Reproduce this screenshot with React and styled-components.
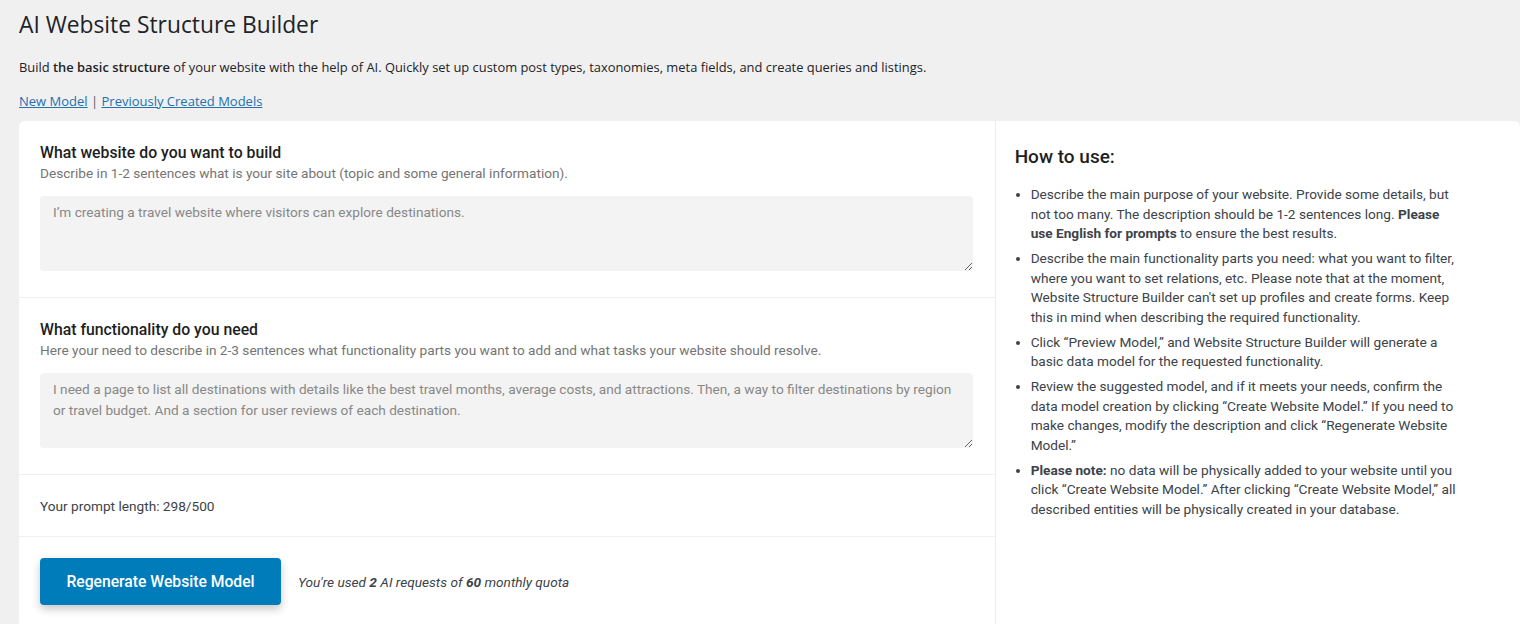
import styled, { createGlobalStyle } from 'styled-components';

const GlobalStyle = createGlobalStyle`
    body {
        margin: 0;
        background: #f0f0f1;
        color: #3c434a;
        font-family: "Open Sans", "Noto Sans", sans-serif;
        font-size: 13px;
    }
`;

const Page = styled.div`
    padding: 0 0 0 19px;
    overflow: hidden;
`;

const Title = styled.h1`
    margin: 0;
    padding: 9px 0 0;
    font-size: 22.8px;
    font-weight: 400;
    line-height: 32px;
    color: #1d2327;
`;

const Lead = styled.p`
    margin: 16px 0 0;
    font-size: 12.9px;
    line-height: 20px;
    color: #1d2327;

    & b {
        font-weight: 600;
    }
`;

const Links = styled.div`
    margin-top: 14px;
    font-size: 13px;
    line-height: 20px;
    color: #50575e;

    & a {
        color: #2271b1;
        text-decoration: underline;
    }
`;

const Card = styled.div`
    margin-top: 10px;
    display: grid;
    grid-template-columns: 65% 35%;
    background: #fff;
    border-radius: 6px;
    font-family: Roboto, "Liberation Sans", sans-serif;
`;

const Main = styled.div`
    display: flex;
    flex-direction: column;
`;

const Section = styled.div`
    padding: ${({ $pad }) => $pad || '22px 22px 26px 21px'};
    border-bottom: ${({ $last }) => ($last ? 'none' : '1px solid #efefef')};
    display: flex;
    align-items: center;
    gap: 17px;
    flex-wrap: wrap;
`;

const Field = styled.div`
    width: 100%;
`;

const FieldTitle = styled.div`
    font-size: 15.8px;
    font-weight: 500;
    line-height: 20px;
    color: #1e1e1e;
`;

const FieldHint = styled.div`
    font-size: 13.65px;
    line-height: 20px;
    color: #757575;
`;

const TextArea = styled.textarea`
    display: block;
    box-sizing: border-box;
    width: 100%;
    height: 75px;
    margin-top: 13px;
    padding: 6px 13px;
    border: none;
    border-radius: 4px;
    background: #f3f3f3;
    resize: vertical;
    font-family: Roboto, "Liberation Sans", sans-serif;
    font-size: 13.65px;
    line-height: 21px;
    color: #888;
    outline: none;

    &::placeholder {
        color: #888;
        opacity: 1;
    }
`;

const Counter = styled.div`
    font-size: 13.65px;
    line-height: 20px;
    color: #3c434a;
`;

const PrimaryButton = styled.button`
    width: 241px;
    height: 47px;
    border: none;
    border-radius: 4px;
    background: #007cba;
    color: #fff;
    font-family: Roboto, "Liberation Sans", sans-serif;
    font-size: 15.7px;
    font-weight: 500;
    box-shadow: 0 4px 8px rgba(0, 0, 0, 0.22);
    cursor: pointer;
`;

const Quota = styled.span`
    font-size: 13.65px;
    font-style: italic;
    color: #3c434a;

    & b {
        font-weight: 700;
    }
`;

const Aside = styled.div`
    border-left: 1px solid #ececec;
    padding: 24px 20px 20px 19px;
`;

const AsideTitle = styled.h3`
    margin: 0;
    font-size: 19px;
    font-weight: 500;
    line-height: 24px;
    color: #1e1e1e;
`;

const Steps = styled.ul`
    margin: 16px 0 0;
    padding: 0 0 0 16px;
    max-width: 429px;
    list-style: disc;
    font-size: 13.65px;
    line-height: 19.5px;
    color: #3c434a;

    & li {
        margin-bottom: 5.5px;
    }

    & b {
        font-weight: 700;
    }
`;

const fields = [
    {
        title: 'What website do you want to build',
        hint: 'Describe in 1-2 sentences what is your site about (topic and some general information).',
        text: 'I’m creating a travel website where visitors can explore destinations.',
    },
    {
        title: 'What functionality do you need',
        hint: 'Here your need to describe in 2-3 sentences what functionality parts you want to add and what tasks your website should resolve.',
        text: 'I need a page to list all destinations with details like the best travel months, average costs, and attractions. Then, a way to filter destinations by region or travel budget. And a section for user reviews of each destination.',
    },
];

export default function App() {
    return (
        <>
            <GlobalStyle />
            <Page>
                <Title>AI Website Structure Builder</Title>
                <Lead>
                    Build <b>the basic structure</b> of your website with the help of AI. Quickly set up custom post
                    types, taxonomies, meta fields, and create queries and listings.
                </Lead>
                <Links>
                    <a href="#new">New Model</a> | <a href="#list">Previously Created Models</a>
                </Links>
                <Card>
                    <Main>
                        {fields.map((f) => (
                            <Section key={f.title}>
                                <Field>
                                    <FieldTitle>{f.title}</FieldTitle>
                                    <FieldHint>{f.hint}</FieldHint>
                                    <TextArea placeholder={f.text} />
                                </Field>
                            </Section>
                        ))}
                        <Section $pad="21px 22px 20px 21px">
                            <Counter>Your prompt length: 298/500</Counter>
                        </Section>
                        <Section $pad="21px 22px 24px 21px" $last>
                            <PrimaryButton>Regenerate Website Model</PrimaryButton>
                            <Quota>
                                You're used <b>2</b> AI requests of <b>60</b> monthly quota
                            </Quota>
                        </Section>
                    </Main>
                    <Aside>
                        <AsideTitle>How to use:</AsideTitle>
                        <Steps>
                            <li>
                                Describe the main purpose of your website. Provide some details, but not too many. The
                                description should be 1-2 sentences long. <b>Please use English for prompts</b> to
                                ensure the best results.
                            </li>
                            <li>
                                Describe the main functionality parts you need: what you want to filter, where you want
                                to set relations, etc. Please note that at the moment, Website Structure Builder can't
                                set up profiles and create forms. Keep this in mind when describing the required
                                functionality.
                            </li>
                            <li>
                                Click “Preview Model,” and Website Structure Builder will generate a basic data model for
                                the requested functionality.
                            </li>
                            <li>
                                Review the suggested model, and if it meets your needs, confirm the data model creation
                                by clicking “Create Website Model.” If you need to make changes, modify the description
                                and click “Regenerate Website Model.”
                            </li>
                            <li>
                                <b>Please note:</b> no data will be physically added to your website until you click
                                “Create Website Model.” After clicking “Create Website Model,” all described entities
                                will be physically created in your database.
                            </li>
                        </Steps>
                    </Aside>
                </Card>
            </Page>
        </>
    );
}
